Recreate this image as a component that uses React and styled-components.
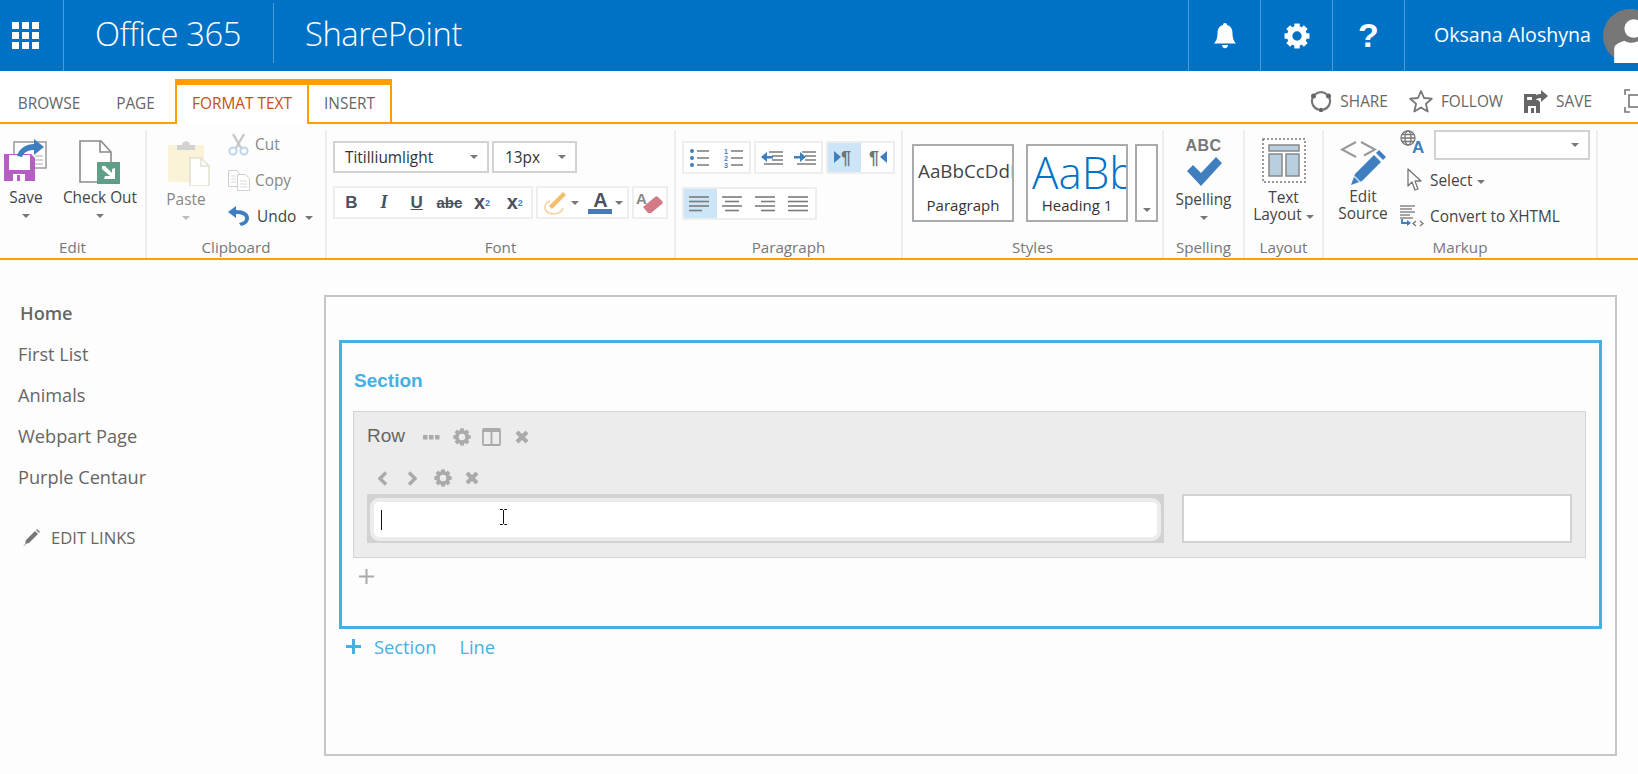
import React from "react";
import styled, { createGlobalStyle } from "styled-components";

const ORANGE = "#ff9e00";
const BLUE = "#45b0e1";
const ICON_BLUE = "#3f7fbf";

const Global = createGlobalStyle`
  html, body {
    margin: 0;
    padding: 0;
    height: 774px;
    overflow: hidden;
    background: #fdfdfd;
    font-family: "Open Sans", "Noto Sans", sans-serif;
    color: #444;
  }
  * { box-sizing: border-box; }
  svg { display: block; flex-shrink: 0; }
`;

const Page = styled.div`
  width: 1638px;
  height: 774px;
  overflow: hidden;
`;

/* ---------- suite bar ---------- */
const Header = styled.header`
  display: flex;
  align-items: stretch;
  height: 71px;
  background: #0072c6;
  color: #fff;
`;
const WaffleCell = styled.div`
  width: 64px;
  display: flex;
  align-items: center;
  padding-left: 12px;
  border-right: 1px solid #4b9bd7;
`;
const Waffle = styled.div`
  display: grid;
  grid-template-columns: repeat(3, 7px);
  grid-auto-rows: 7px;
  gap: 3px;
  span { background: #fff; }
`;
const Brand = styled.div`
  display: flex;
  align-items: center;
  width: ${(p) => p.$w}px;
  padding: 0 0 4px 31px;
  font-weight: 300;
  font-size: 32.7px;
  letter-spacing: -0.4px;
`;
const HeadDivider = styled.div`
  width: 1px;
  height: 60px;
  margin-top: 3px;
  background: #4b9bd7;
`;
const Spacer = styled.div`
  flex: 1;
`;
const HeadButton = styled.div`
  width: 72px;
  display: flex;
  align-items: center;
  justify-content: center;
  border-left: 1px solid #4b9bd7;
  font: bold 34px "Liberation Sans", sans-serif;
`;
const User = styled.div`
  width: 234px;
  display: flex;
  align-items: center;
  padding-left: 29px;
  gap: 12px;
  border-left: 1px solid #4b9bd7;
  overflow: hidden;
  font-size: 19.6px;
  white-space: nowrap;
`;
const UserName = styled.span`
  padding-bottom: 3px;
`;

/* ---------- tabs ---------- */
const TabBar = styled.div`
  display: flex;
  align-items: flex-end;
  height: 53px;
  background: #fff;
  border-bottom: 2px solid ${ORANGE};
`;
const Tab = styled.div`
  width: ${(p) => p.$w}px;
  height: 37px;
  margin-right: ${(p) => p.$mr || 0}px;
  display: flex;
  align-items: center;
  justify-content: center;
  font-size: 15.4px;
  color: #666;
`;
const ContextTab = styled(Tab)`
  height: ${(p) => (p.$active ? 45 : 43)}px;
  background: #fff;
  border-top: 6px solid ${ORANGE};
  border-right: 2px solid ${ORANGE};
  border-left: ${(p) => (p.$active ? `2px solid ${ORANGE}` : "none")};
  margin-bottom: ${(p) => (p.$active ? -2 : 0)}px;
  padding-bottom: ${(p) => (p.$active ? 2 : 0)}px;
  color: ${(p) => (p.$active ? "#c4510e" : "#666")};
`;
const Actions = styled.div`
  margin-left: auto;
  height: 24px;
  margin-bottom: 9px;
  display: flex;
  align-items: center;
  font-size: 15.4px;
  color: #666;
`;
const Action = styled.div`
  display: flex;
  align-items: center;
  gap: 8px;
  margin-right: ${(p) => p.$mr}px;
`;

/* ---------- ribbon ---------- */
const Ribbon = styled.div`
  display: flex;
  height: 136px;
  padding-top: 6px;
  border-bottom: 2px solid ${ORANGE};
`;
const Group = styled.section`
  width: ${(p) => p.$w}px;
  display: flex;
  flex-direction: column;
  border-right: 2px solid #eeeeee;
`;
const GroupBody = styled.div`
  flex: 1;
  display: flex;
  padding: ${(p) => p.$pad || "0"};
  gap: ${(p) => p.$gap || 0}px;
  min-height: 0;
`;
const GroupLabel = styled.div`
  height: 24px;
  text-align: center;
  font-size: 15.2px;
  line-height: 26px;
  color: #777;
`;
const BigButton = styled.div`
  width: ${(p) => p.$w}px;
  padding-top: ${(p) => p.$top || 8}px;
  display: flex;
  flex-direction: column;
  align-items: center;
  flex-shrink: 0;
  font-size: 15.4px;
  line-height: 17px;
  color: ${(p) => (p.$faded ? "#888" : "#444")};
  text-align: center;
`;
const BigLabel = styled.div`
  margin-top: ${(p) => p.$mt || 7}px;
  white-space: nowrap;
`;
const NudgedIcon = styled.span`
  padding-left: ${(p) => p.$pl}px;
`;
const Arrow = styled.span`
  display: inline-block;
  width: 0;
  height: 0;
  margin: ${(p) => p.$m || "0"};
  border-left: 4px solid transparent;
  border-right: 4px solid transparent;
  border-top: 4px solid ${(p) => p.$c || "#777"};
`;
const SmallStack = styled.div`
  display: flex;
  flex-direction: column;
  padding-top: 2px;
  gap: 12px;
`;
const SmallRow = styled.div`
  height: 24px;
  display: flex;
  align-items: center;
  font-size: 15.4px;
  color: ${(p) => (p.$faded ? "#888" : "#444")};
  white-space: nowrap;
`;
const SmallIcon = styled.span`
  width: ${(p) => p.$w || 27}px;
  display: flex;
  flex-shrink: 0;
`;
const Rows = styled.div`
  display: flex;
  flex-direction: column;
  gap: 13px;
`;
const ToolRow = styled.div`
  display: flex;
  gap: ${(p) => p.$gap || 3}px;
`;
const Select = styled.div`
  width: ${(p) => p.$w}px;
  height: ${(p) => p.$h || 32}px;
  display: flex;
  align-items: center;
  justify-content: space-between;
  padding: 0 9px 0 ${(p) => p.$pl || 10}px;
  border: 2px solid #d2d2d2;
  background: #fff;
  font-size: 15.4px;
  color: #333;
`;
const Tools = styled.div`
  width: ${(p) => p.$w}px;
  height: 33px;
  display: flex;
  border: 2px solid #eeeeee;
  background: #fff;
`;
const Tool = styled.div`
  flex: ${(p) => p.$flex || 1};
  display: flex;
  align-items: center;
  justify-content: center;
  gap: ${(p) => p.$gap || 0}px;
  background: ${(p) => (p.$on ? "#cde6f7" : "transparent")};
  font: ${(p) => p.$font || "bold 17px 'Liberation Sans', sans-serif"};
  color: #4a5260;
  text-decoration: ${(p) => p.$deco || "none"};
  sub, sup { font-size: 9px; color: ${ICON_BLUE}; line-height: 0; }
`;
const FontColor = styled.span`
  display: inline-block;
  width: 24px;
  text-align: center;
  border-bottom: 5px solid #4a7ab5;
  font: bold 20px/18px "Liberation Sans", sans-serif;
  color: #4a5260;
`;
const StyleCard = styled.div`
  width: ${(p) => p.$w || 102}px;
  height: 78px;
  display: flex;
  flex-direction: column;
  border: 2px solid #a8abae;
  background: #fff;
  overflow: hidden;
`;
const MoreCard = styled(StyleCard)`
  margin-left: 7px;
  align-items: center;
  justify-content: flex-end;
  padding-bottom: 8px;
`;
const Preview = styled.div`
  height: 49px;
  padding: 2px 0 0 ${(p) => p.$pl}px;
  display: flex;
  align-items: center;
  white-space: nowrap;
  overflow: hidden;
  line-height: 1;
  font-size: ${(p) => p.$size}px;
  font-weight: ${(p) => p.$weight || 400};
  color: ${(p) => p.$c};
`;
const PreviewName = styled.div`
  text-align: center;
  font-size: 15px;
  line-height: 20px;
  color: #333;
`;
const Abc = styled.div`
  margin-bottom: 2px;
  font: bold 16px/16px "Liberation Sans", sans-serif;
  letter-spacing: 0.5px;
  color: #777;
`;
const MarkupStack = styled.div`
  display: flex;
  flex-direction: column;
  margin-left: 1px;
`;
const LangRow = styled.div`
  display: flex;
  gap: 9px;
  height: 30px;
  margin-bottom: 8px;
`;
const ConvertRow = styled(SmallRow)`
  margin-top: 12px;
`;

/* ---------- page body ---------- */
const Body = styled.div`
  display: flex;
`;
const Nav = styled.nav`
  width: 324px;
  padding: 41px 0 0 18px;
  font-size: 18.2px;
  color: #666;
`;
const NavItem = styled.div`
  height: 41px;
  line-height: 24px;
  font-weight: ${(p) => (p.$on ? 600 : 400)};
  padding-left: ${(p) => (p.$on ? 2 : 0)}px;
  white-space: nowrap;
`;
const EditLinks = styled.div`
  margin-top: 20px;
  padding-left: 4px;
  display: flex;
  align-items: center;
  gap: 11px;
  font-size: 16.6px;
`;
const Main = styled.main`
  width: 1293px;
  height: 461px;
  margin-top: 35px;
  padding: 43px 13px 0;
  border: 2px solid #c6c6c6;
`;
const SectionBox = styled.div`
  height: 289px;
  padding: 26px 13px 0 11px;
  border: 3px solid ${BLUE};
`;
const SectionTitle = styled.div`
  height: 24px;
  padding-left: 1px;
  font: bold 19px/24px "Liberation Sans", sans-serif;
  color: ${BLUE};
`;
const RowBox = styled.div`
  height: 147px;
  margin-top: 18px;
  padding: 12px 13px 0;
  border: 1px solid #d4d4d4;
  background: #ececec;
`;
const RowHead = styled.div`
  height: 26px;
  display: flex;
  align-items: center;
  font: 19px "Liberation Sans", sans-serif;
  color: #666;
`;
const RowLabel = styled.span`
  width: 56px;
  position: relative;
  top: -1px;
`;
const IconSlot = styled.span`
  display: flex;
  margin-left: ${(p) => p.$ml || 0}px;
`;
const CellTools = styled.div`
  height: 26px;
  margin-top: 15px;
  padding-left: 11px;
  display: flex;
  align-items: center;
`;
const Cells = styled.div`
  display: flex;
  gap: 18px;
  margin-top: 3px;
`;
const ActiveCell = styled.div`
  width: 797px;
  height: 49px;
  border: 3px solid #d2d2d2;
  border-top-width: 4px;
  border-bottom-width: 2px;
  background: #d2d2d2;
`;
const ActiveInner = styled.div`
  height: 100%;
  display: flex;
  align-items: center;
  padding-left: 7px;
  border: 4px solid #ececec;
  border-radius: 9px;
  background: #fff;
`;
const Caret = styled.span`
  width: 1px;
  height: 20px;
  background: #111;
`;
const Beam = styled.span`
  margin: 0 0 5px 118px;
`;
const PlainCell = styled.div`
  width: 390px;
  height: 49px;
  border: 2px solid #d2d2d2;
  background: #fff;
`;
const AddRow = styled.div`
  margin: 11px 0 0 6px;
`;
const Footer = styled.div`
  display: flex;
  align-items: center;
  height: 24px;
  margin: 5px 0 0 7px;
  font-size: 18.3px;
  color: ${BLUE};
`;
const FooterLink = styled.span`
  margin-left: ${(p) => p.$ml}px;
`;

/* ---------- drawings ---------- */
const Gear = ({ s, c }) => (
  <svg width={s} height={s} viewBox="0 0 24 24">
    {[0, 45, 90, 135, 180, 225, 270, 315].map((a) => (
      <rect key={a} x="9.5" y="0.5" width="5" height="6" fill={c} transform={`rotate(${a} 12 12)`} />
    ))}
    <circle cx="12" cy="12" r="6.8" fill="none" stroke={c} strokeWidth="5" />
  </svg>
);
const Bell = () => (
  <svg width="22" height="26" viewBox="0 0 22 26">
    <path d="M11 0c1.300 0 2 .9 2 2 3.800 1 5.500 4 5.500 8 0 5 1 7.500 3.500 10.500H0C2.500 17.500 3.500 15 3.500 10c0-4 1.700-7 5.500-8 0-1.100.7-2 2-2z" fill="#fff" />
    <path d="M8 22h6c0 1.800-1.300 3.200-3 3.200S8 23.800 8 22z" fill="#fff" />
  </svg>
);
const Avatar = () => (
  <svg width="54" height="54" viewBox="0 0 58 58">
    <circle cx="29" cy="29" r="29" fill="#777" />
    <circle cx="33" cy="21" r="10" fill="#fff" />
    <path d="M12 58V43c0-5 5-7 11-9 5 3 11 3 16 0 6 2 11 4 11 9v15z" fill="#fff" />
  </svg>
);
const ShareIcon = () => (
  <svg width="22" height="22" viewBox="0 0 22 22" fill="none" stroke="#777" strokeWidth="2.200">
    <path d="M5 4.500A9 9 0 0 1 17 4.500" />
    <path d="M19.500 8A9 9 0 0 1 13 19.800" />
    <path d="M9 19.800A9 9 0 0 1 2.500 8" />
    <g fill="#666" stroke="none">
      <circle cx="3.500" cy="6" r="2.500" />
      <circle cx="18.500" cy="6" r="2.500" />
      <circle cx="11" cy="20" r="2.200" />
    </g>
  </svg>
);
const StarIcon = () => (
  <svg width="24" height="24" viewBox="0 0 24 24">
    <path d="M12 2l3 7 7.800.7-5.900 5.200 1.800 7.600L12 18.500l-6.700 4 1.800-7.600L1.200 9.700 9 9z" fill="#fff" stroke="#777" strokeWidth="1.800" strokeLinejoin="round" />
  </svg>
);
const SaveTop = () => (
  <svg width="24" height="24" viewBox="0 0 24 24">
    <path d="M0 5h12v3h-2v3h4l2 2v11H0z" fill="#666" />
    <rect x="4" y="17" width="8" height="7" fill="#fff" />
    <rect x="3" y="8" width="5" height="3" fill="#fff" />
    <rect x="7" y="19" width="3" height="5" fill="#666" />
    <path d="M9 12c0-5 3-7 8-7V1l7 6-7 6V9c-3 0-5 1-6 3z" fill="#666" />
  </svg>
);
const FocusIcon = () => (
  <svg width="24" height="24" viewBox="0 0 24 24" fill="none" stroke="#777" strokeWidth="1.600">
    <path d="M6 1H1v5M1 18v5h5" />
    <rect x="5" y="6" width="16" height="12" />
  </svg>
);
const SaveBig = () => (
  <svg width="44" height="46" viewBox="0 0 44 46">
    <rect x="10" y="4" width="32" height="26" fill="#fff" stroke="#999" strokeWidth="1.500" />
    <path d="M31 18h8M31 22h8M31 26h8" stroke="#aaa" />
    <path d="M0 16h27l4 4v23H0z" fill="#b65ec5" />
    <rect x="5" y="17" width="21" height="15" fill="#fff" />
    <rect x="9" y="36" width="12" height="7" fill="#fff" />
    <rect x="13" y="37" width="3" height="6" fill="#b65ec5" />
    <path d="M13 18C15 10 23 6 30 6V1l10 8-10 8v-5c-6 0-10 2-12 7z" fill={ICON_BLUE} />
  </svg>
);
const CheckOutBig = () => (
  <svg width="42" height="46" viewBox="0 0 42 46">
    <path d="M1 3h21l10 11v30H1z" fill="#fff" stroke="#8a8a8a" strokeWidth="1.600" />
    <path d="M21 3v11h11" fill="none" stroke="#8a8a8a" strokeWidth="1.600" />
    <rect x="18" y="24" width="23" height="22" fill="#5f9f87" />
    <path d="M23 28h3l7 7v-4l3-1v11H25l1-3h5l-8-7z" fill="#fff" />
  </svg>
);
const PasteBig = () => (
  <svg width="42" height="46" viewBox="0 0 42 46">
    <rect x="0" y="5" width="36" height="37" rx="1" fill="#faf3d7" />
    <path d="M9 5h5c0-5 8-5 8 0h5v5H9z" fill="#d2d2d2" />
    <path d="M22 18h11l8 8v20H22z" fill="#fff" stroke="#e4e0cf" strokeWidth="1.500" />
    <path d="M33 18v8h8" fill="none" stroke="#e4e0cf" strokeWidth="1.500" />
  </svg>
);
const CutIcon = () => (
  <svg width="21" height="23" viewBox="0 0 21 23" fill="none">
    <path d="M5 1l8 14M16 1L8 15" stroke="#c8c8c8" strokeWidth="2.400" />
    <circle cx="5" cy="18" r="3.600" stroke="#bcd4ea" strokeWidth="2" />
    <circle cx="16" cy="18" r="3.600" stroke="#bcd4ea" strokeWidth="2" />
  </svg>
);
const CopyIcon = () => (
  <svg width="22" height="21" viewBox="0 0 22 21" fill="#fff" stroke="#cfcfcf">
    <path d="M.5.5h8l3 3v13H.5z" />
    <path d="M9.500 4.500h8l4 4v12h-12z" />
    <path d="M3 6h5M3 9h5M3 12h5M12 11h7M12 14h7M12 17h7" stroke="#d8d8d8" />
  </svg>
);
const UndoIcon = () => (
  <svg width="22" height="20" viewBox="0 0 22 20" fill="none">
    <path d="M0 6l8-6v4c8 0 13 3 13 8 0 4-3 7-8 8l-2-3c4-1 6-2 6-5 0-2-3-4-9-4v4z" fill={ICON_BLUE} />
  </svg>
);
const Highlight = () => (
  <svg width="24" height="24" viewBox="0 0 24 24" fill="none">
    <path d="M6 15L20 1l3 3L9 18z" fill="#f3bd6b" />
    <path d="M7 10C1 12 0 19 6 22c6 2 13 0 14-5" stroke="#f3d29c" strokeWidth="1.500" />
  </svg>
);
const Eraser = () => (
  <svg width="28" height="24" viewBox="0 0 28 24">
    <text x="0" y="13" fontSize="15" fontWeight="bold" fontFamily="Liberation Sans" fill="#888">A</text>
    <path d="M7 16L19 6c1-1 2-1 3 0l4 4c1 1 1 2 0 3L15 22h-3z" fill="#d27a86" />
  </svg>
);
const Lines = ({ rows }) => (
  <svg width="22" height="18" viewBox="0 0 22 18" stroke="#7b7b7b" strokeWidth="1.600">
    {rows.map(([a, b], i) => (
      <line key={i} x1={a} x2={b} y1={2 + i * 4.500} y2={2 + i * 4.500} />
    ))}
  </svg>
);
const Bullets = () => (
  <svg width="22" height="22" viewBox="0 0 22 22" stroke="#7b7b7b" strokeWidth="1.500">
    <path d="M8 4h12M8 11h12M8 18h12" />
    <g fill={ICON_BLUE} stroke="none">
      <circle cx="3" cy="4" r="2" />
      <circle cx="3" cy="11" r="2" />
      <circle cx="3" cy="18" r="2" />
    </g>
  </svg>
);
const Numbers = () => (
  <svg width="22" height="22" viewBox="0 0 22 22" stroke="#7b7b7b" strokeWidth="1.500">
    <path d="M9 4h12M9 11h12M9 18h12" />
    <g fill={ICON_BLUE} stroke="none" fontSize="7" fontWeight="bold" fontFamily="Liberation Sans">
      <text x="2" y="6.500">1</text>
      <text x="2" y="13.500">2</text>
      <text x="2" y="20.500">3</text>
    </g>
  </svg>
);
const Indent = ({ right }) => (
  <svg width="24" height="18" viewBox="0 0 24 18" stroke="#7b7b7b" strokeWidth="1.500">
    <path d="M9 3h14M12 7h11M12 11h11M4 15h19" />
    <path
      d={right ? "M1 7h6V3l6 5-6 5V9.500H1z" : "M1 8l6-5v4h6v2.500H7V13z"}
      fill={ICON_BLUE}
      stroke="none"
    />
  </svg>
);
const ParaDir = ({ rtl }) => (
  <svg width="22" height="20" viewBox="0 0 22 20">
    {rtl ? <path d="M21 3v12l-7-6z" fill={ICON_BLUE} /> : <path d="M1 3v12l7-6z" fill={ICON_BLUE} />}
    <text x={rtl ? 3 : 8} y="16" fontSize="18" fontWeight="bold" fontFamily="Liberation Sans" fill="#6d7676">¶</text>
  </svg>
);
const SpellCheck = () => (
  <svg width="36" height="30" viewBox="0 0 36 30">
    <path d="M1 15l6-6 8 8L30 1l6 6-21 23z" fill={ICON_BLUE} />
  </svg>
);
const LayoutIcon = () => (
  <svg width="44" height="45" viewBox="0 0 44 45">
    <rect x="1" y="1" width="42" height="43" fill="#fff" stroke="#777" strokeWidth="1.500" strokeDasharray="2 2" />
    <rect x="7" y="7" width="30" height="6" fill="#b8cfe0" stroke="#888" strokeWidth="1.500" />
    <rect x="7" y="16" width="13" height="22" fill="#b8cfe0" stroke="#888" strokeWidth="1.500" />
    <rect x="24" y="16" width="13" height="22" fill="#b8cfe0" stroke="#888" strokeWidth="1.500" />
  </svg>
);
const EditSourceIcon = () => (
  <svg width="48" height="48" viewBox="0 0 48 48" fill="none">
    <path d="M17 5L3 12.500 17 20M22 5l14 7.500-11 6" stroke="#999" strokeWidth="2" />
    <path d="M12 48l4-11 19-19 7 7-19 19z" fill={ICON_BLUE} />
    <path d="M37 16l3-3 7 7-3 3z" fill={ICON_BLUE} />
    <path d="M15 39l6 6" stroke="#cfe0ef" strokeWidth="1.500" />
  </svg>
);
const LangIcon = () => (
  <svg width="26" height="24" viewBox="0 0 26 24">
    <g fill="none" stroke="#777" strokeWidth="1.300">
      <circle cx="8" cy="8" r="7" />
      <ellipse cx="8" cy="8" rx="3" ry="7" />
      <path d="M1 8h14M2 4.500h12M2 11.500h12" />
    </g>
    <text x="12" y="23" fontSize="17" fontWeight="bold" fontFamily="Liberation Sans" fill={ICON_BLUE}>A</text>
  </svg>
);
const PointerIcon = () => (
  <svg width="15" height="24" viewBox="0 0 15 24">
    <path d="M1 1v17l4-4 3 8 3-1-3-8h6z" fill="#fff" stroke="#777" strokeWidth="1.300" strokeLinejoin="round" />
  </svg>
);
const ConvertIcon = () => (
  <svg width="24" height="24" viewBox="0 0 24 24">
    <path d="M0 2h15M0 5h12M0 8h15M0 11h10M0 14h13" stroke="#888" strokeWidth="1.400" />
    <path d="M2 15v4h6" fill="none" stroke={ICON_BLUE} strokeWidth="1.800" />
    <path d="M7 16l4 3-4 3z" fill={ICON_BLUE} />
    <path d="M16 17l-3 2.500 3 2.500M20 17l3 2.500-3 2.500" fill="none" stroke="#777" strokeWidth="1.300" />
  </svg>
);
const PencilSmall = () => (
  <svg width="18" height="18" viewBox="0 0 18 18">
    <path d="M4 11L13 2l3 3-9 9-4 1z" fill="#777" />
    <path d="M14 1l1-1 3 3-1 1z" fill="#777" />
    <path d="M1 17l2-2 1 1z" fill="#999" />
  </svg>
);
const Dots = () => (
  <svg width="17" height="6" viewBox="0 0 17 6" fill="#aaa">
    <rect x="0" y="1" width="4.500" height="4.500" />
    <rect x="6" y="1" width="4.500" height="4.500" />
    <rect x="12" y="1" width="4.500" height="4.500" />
  </svg>
);
const Columns = () => (
  <svg width="19" height="18" viewBox="0 0 19 18" fill="none" stroke="#aaa" strokeWidth="1.800">
    <rect x="1" y="1" width="17" height="16" rx="1" />
    <path d="M9.500 1v16" />
    <path d="M1 3h17" strokeWidth="2" />
  </svg>
);
const Cross = () => (
  <svg width="14" height="14" viewBox="0 0 14 14" stroke="#aaa" strokeWidth="4.200">
    <path d="M2 2l10 10M12 2L2 12" />
  </svg>
);
const Chevron = ({ right }) => (
  <svg width="10" height="15" viewBox="0 0 10 15" fill="none" stroke="#aaa" strokeWidth="3.400">
    <path d={right ? "M2 1.500l6 6-6 6" : "M8 1.500l-6 6 6 6"} />
  </svg>
);
const Plus = ({ c, w }) => (
  <svg width="15" height="15" viewBox="0 0 15 15" stroke={c} strokeWidth={w}>
    <path d="M7.500 0v15M0 7.500h15" />
  </svg>
);
const IBeam = () => (
  <svg width="7" height="16" viewBox="0 0 7 16" fill="none" stroke="#111">
    <path d="M0 .5h2.500l1 1 1-1H7M3.500 1.500v13M0 15.500h2.500l1-1 1 1H7" />
  </svg>
);

const NAV = ["First List", "Animals", "Webpart Page", "Purple Centaur"];
const ALIGN = {
  left: [[0, 20], [0, 20], [0, 20], [0, 13]],
  center: [[0, 20], [3, 17], [0, 20], [3, 17]],
  right: [[0, 20], [6, 20], [0, 20], [6, 20]],
  justify: [[0, 20], [0, 20], [0, 20], [0, 20]],
};
const SCRIPT_FONT = "bold 20px 'Liberation Sans', sans-serif";

export default function App() {
  return (
    <Page>
      <Global />
      <Header>
        <WaffleCell>
          <Waffle>
            {Array.from({ length: 9 }, (_, i) => <span key={i} />)}
          </Waffle>
        </WaffleCell>
        <Brand $w={209}>Office 365</Brand>
        <HeadDivider />
        <Brand $w={300}>SharePoint</Brand>
        <Spacer />
        <HeadButton><Bell /></HeadButton>
        <HeadButton><Gear s={26} c="#fff" /></HeadButton>
        <HeadButton>?</HeadButton>
        <User>
          <UserName>Oksana Aloshyna</UserName>
          <Avatar />
        </User>
      </Header>

      <TabBar>
        <Tab $w={98}>BROWSE</Tab>
        <Tab $w={75} $mr={2}>PAGE</Tab>
        <ContextTab $w={134} $active>FORMAT TEXT</ContextTab>
        <ContextTab $w={83}>INSERT</ContextTab>
        <Actions>
          <Action $mr={21}><ShareIcon />SHARE</Action>
          <Action $mr={21}><StarIcon />FOLLOW</Action>
          <Action $mr={32}><SaveTop />SAVE</Action>
          <Action $mr={-10}><FocusIcon /></Action>
        </Actions>
      </TabBar>

      <Ribbon>
        <Group $w={147}>
          <GroupBody $pad="0 0 0 3px" $gap={11}>
            <BigButton $w={46}>
              <SaveBig />
              <BigLabel $mt={5}>Save</BigLabel>
              <Arrow $m="8px 0 0" />
            </BigButton>
            <BigButton $w={80}>
              <CheckOutBig />
              <BigLabel $mt={5}>Check Out</BigLabel>
              <Arrow $m="8px 0 0" />
            </BigButton>
          </GroupBody>
          <GroupLabel>Edit</GroupLabel>
        </Group>

        <Group $w={180}>
          <GroupBody $pad="0 0 0 9px" $gap={12}>
            <BigButton $w={60} $top={10} $faded>
              <NudgedIcon $pl={6}><PasteBig /></NudgedIcon>
              <BigLabel $mt={5}>Paste</BigLabel>
              <Arrow $c="#bbb" $m="8px 0 0" />
            </BigButton>
            <SmallStack>
              <SmallRow $faded><SmallIcon><CutIcon /></SmallIcon>Cut</SmallRow>
              <SmallRow $faded><SmallIcon><CopyIcon /></SmallIcon>Copy</SmallRow>
              <SmallRow>
                <SmallIcon $w={29}><UndoIcon /></SmallIcon>Undo
                <Arrow $m="4px 0 0 9px" />
              </SmallRow>
            </SmallStack>
          </GroupBody>
          <GroupLabel>Clipboard</GroupLabel>
        </Group>

        <Group $w={349}>
          <GroupBody $pad="11px 0 0 6px">
            <Rows>
              <ToolRow>
                <Select $w={156}>Titilliumlight<Arrow /></Select>
                <Select $w={85} $pl={11}>13px<Arrow /></Select>
              </ToolRow>
              <ToolRow>
                <Tools $w={200}>
                  <Tool>B</Tool>
                  <Tool $font="italic bold 18px 'Liberation Serif', serif">I</Tool>
                  <Tool $deco="underline">U</Tool>
                  <Tool $deco="line-through" $font="bold 15px 'Liberation Sans', sans-serif">abc</Tool>
                  <Tool $font={SCRIPT_FONT}>x<sub>2</sub></Tool>
                  <Tool $font={SCRIPT_FONT}>x<sup>2</sup></Tool>
                </Tools>
                <Tools $w={93}>
                  <Tool $gap={4}><Highlight /><Arrow /></Tool>
                  <Tool $gap={3} $flex={0.9}>
                    <FontColor>A</FontColor>
                    <Arrow />
                  </Tool>
                </Tools>
                <Tools $w={36}><Tool><Eraser /></Tool></Tools>
              </ToolRow>
            </Rows>
          </GroupBody>
          <GroupLabel>Font</GroupLabel>
        </Group>

        <Group $w={227}>
          <GroupBody $pad="11px 0 0 6px">
            <Rows>
              <ToolRow>
                <Tools $w={69}>
                  <Tool><Bullets /></Tool>
                  <Tool><Numbers /></Tool>
                </Tools>
                <Tools $w={69}>
                  <Tool><Indent /></Tool>
                  <Tool><Indent right /></Tool>
                </Tools>
                <Tools $w={69}>
                  <Tool $on><ParaDir /></Tool>
                  <Tool><ParaDir rtl /></Tool>
                </Tools>
              </ToolRow>
              <ToolRow>
                <Tools $w={135}>
                  <Tool $on><Lines rows={ALIGN.left} /></Tool>
                  <Tool><Lines rows={ALIGN.center} /></Tool>
                  <Tool><Lines rows={ALIGN.right} /></Tool>
                  <Tool><Lines rows={ALIGN.justify} /></Tool>
                </Tools>
              </ToolRow>
            </Rows>
          </GroupBody>
          <GroupLabel>Paragraph</GroupLabel>
        </Group>

        <Group $w={261}>
          <GroupBody $pad="14px 0 0 9px">
            <ToolRow $gap={12}>
              <StyleCard>
                <Preview $pl={4} $size={18.8} $c="#444">AaBbCcDdEe</Preview>
                <PreviewName>Paragraph</PreviewName>
              </StyleCard>
              <StyleCard>
                <Preview $pl={4} $size={44} $weight={300} $c="#0072c6">AaBb</Preview>
                <PreviewName>Heading 1</PreviewName>
              </StyleCard>
            </ToolRow>
            <MoreCard $w={23}><Arrow /></MoreCard>
          </GroupBody>
          <GroupLabel>Styles</GroupLabel>
        </Group>

        <Group $w={81}>
          <GroupBody>
            <BigButton $w={79} $top={8}>
              <Abc>ABC</Abc>
              <SpellCheck />
              <BigLabel $mt={5}>Spelling</BigLabel>
              <Arrow $m="8px 0 0" />
            </BigButton>
          </GroupBody>
          <GroupLabel>Spelling</GroupLabel>
        </Group>

        <Group $w={79}>
          <GroupBody>
            <BigButton $w={77}>
              <LayoutIcon />
              <BigLabel $mt={6}>Text<br />Layout <Arrow $m="0 0 1px" /></BigLabel>
            </BigButton>
          </GroupBody>
          <GroupLabel>Layout</GroupLabel>
        </Group>

        <Group $w={274}>
          <GroupBody $pad="0 0 0 3px">
            <BigButton $w={72} $top={7}>
              <EditSourceIcon />
              <BigLabel $mt={3}>Edit<br />Source</BigLabel>
            </BigButton>
            <MarkupStack>
              <LangRow>
                <SmallIcon $w={25}><LangIcon /></SmallIcon>
                <Select $w={156} $h={30}><span /><Arrow /></Select>
              </LangRow>
              <SmallRow>
                <SmallIcon $w={30}><NudgedIcon $pl={7}><PointerIcon /></NudgedIcon></SmallIcon>Select <Arrow $m="3px 0 0 5px" />
              </SmallRow>
              <ConvertRow>
                <SmallIcon $w={30}><ConvertIcon /></SmallIcon>Convert to XHTML
              </ConvertRow>
            </MarkupStack>
          </GroupBody>
          <GroupLabel>Markup</GroupLabel>
        </Group>
      </Ribbon>

      <Body>
        <Nav>
          <NavItem $on>Home</NavItem>
          {NAV.map((n) => <NavItem key={n}>{n}</NavItem>)}
          <EditLinks><PencilSmall />EDIT LINKS</EditLinks>
        </Nav>
        <Main>
          <SectionBox>
            <SectionTitle>Section</SectionTitle>
            <RowBox>
              <RowHead>
                <RowLabel>Row</RowLabel>
                <IconSlot><Dots /></IconSlot>
                <IconSlot $ml={13}><Gear s={18} c="#aaa" /></IconSlot>
                <IconSlot $ml={11}><Columns /></IconSlot>
                <IconSlot $ml={14}><Cross /></IconSlot>
              </RowHead>
              <CellTools>
                <IconSlot><Chevron /></IconSlot>
                <IconSlot $ml={19}><Chevron right /></IconSlot>
                <IconSlot $ml={17}><Gear s={18} c="#aaa" /></IconSlot>
                <IconSlot $ml={13}><Cross /></IconSlot>
              </CellTools>
              <Cells>
                <ActiveCell>
                  <ActiveInner>
                    <Caret />
                    <Beam><IBeam /></Beam>
                  </ActiveInner>
                </ActiveCell>
                <PlainCell />
              </Cells>
            </RowBox>
            <AddRow><Plus c="#aaa" w={2} /></AddRow>
          </SectionBox>
          <Footer>
            <Plus c={BLUE} w={3} />
            <FooterLink $ml={13}>Section</FooterLink>
            <FooterLink $ml={23}>Line</FooterLink>
          </Footer>
        </Main>
      </Body>
    </Page>
  );
}
